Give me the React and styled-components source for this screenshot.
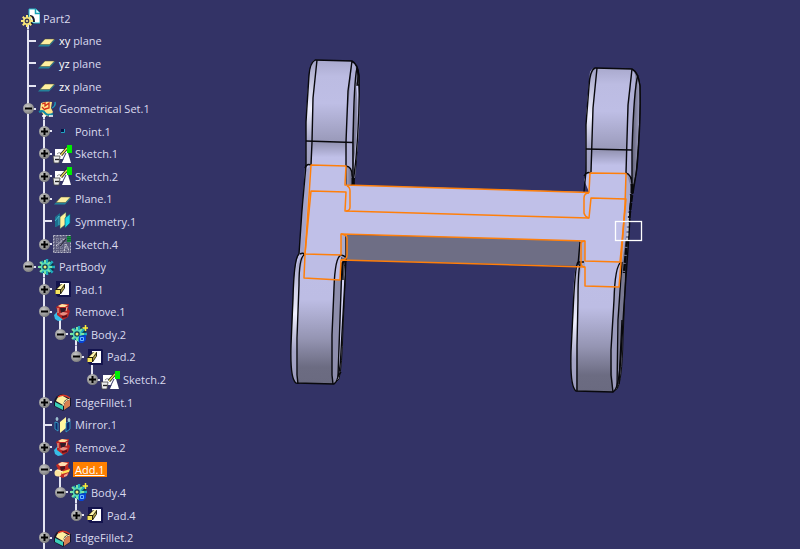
import React from "react";
import styled, { createGlobalStyle } from "styled-components";

const GlobalStyle = createGlobalStyle`
  body {
    margin: 0;
    background-color: #333366;
  }
`;

const Screen = styled.div`
  display: flex;
  min-height: 100vh;
  background-color: #333366;
  font-family: "Open Sans", "Noto Sans", sans-serif;
  font-size: 11px;
  line-height: 15px;
  color: #dadaee;
`;

const Tree = styled.ul`
  display: flex;
  flex-direction: column;
  flex: 0 0 190px;
  box-sizing: border-box;
  margin: 0;
  padding: 7px 0 0 20px;
  list-style: none;
`;

const Row = styled.li`
  display: flex;
  flex: 1 0 20px;
`;

const line = "linear-gradient(#e4e4f2, #e4e4f2)";

const guides = {
  none: "none",
  full: `${line} 7px 0 / 2px 100% no-repeat`,
  top: `${line} 7px 0 / 2px 50% no-repeat`,
  bottom: `${line} 7px 100% / 2px 50% no-repeat`,
};

const Guide = styled.span`
  flex: 0 0 16px;
  background: ${({ $line }) => guides[$line]};
`;

const Branch = styled(Guide)`
  display: flex;
  align-items: center;
  justify-content: center;
  background: ${({ $line }) => guides[$line]},
    ${line} 8px 50% / 8px 2px no-repeat;
`;

const Expander = styled.button`
  display: flex;
  align-items: center;
  justify-content: center;
  width: 11px;
  height: 11px;
  padding: 0;
  border: none;
  border-radius: 50%;
  background: radial-gradient(circle at 40% 35%, #c8c8c8, #8f8f8f 60%, #606060);
  cursor: pointer;
`;

const IconBox = styled.span`
  display: flex;
  flex: 0 0 20px;
  align-items: center;
  background: ${({ $line }) => guides[$line]};
`;

const Label = styled.a`
  align-self: center;
  margin-left: 1px;
  padding: 0 2px;
  color: ${({ $active }) => ($active ? "#ffffff" : "inherit")};
  background-color: ${({ $active }) => ($active ? "#ff8000" : "transparent")};
  text-decoration: ${({ $active }) => ($active ? "underline" : "none")};
  white-space: nowrap;
`;

const Strong = styled.span`
  color: #ffffff;
`;

const Viewport = styled.main`
  flex: 1;
  min-width: 0;
`;

const Model = styled.svg`
  display: block;
  width: 100%;
  height: 100vh;
`;

const Icon = ({ children }) => (
  <svg width="20" height="20" viewBox="0 0 20 20" aria-hidden="true">
    {children}
  </svg>
);

const spokes = [0, 45, 90, 135, 180, 225, 270, 315];

const Cog = ({ x, y, fill, r = 6, width = 2.5 }) => (
  <g stroke={fill} strokeWidth={width}>
    {spokes.map((angle) => (
      <path key={angle} d={`M${x} ${y - 2}V${y - r}`} transform={`rotate(${angle} ${x} ${y})`} />
    ))}
  </g>
);

const PartIcon = () => (
  <Icon>
    <circle cx="11" cy="11" r="4.5" fill="#5a5a66" stroke="#17172a" strokeWidth="2" />
    <path d="M9 1h7l4 4v10h-7l-4-6z" fill="#fff" stroke="#27b9c9" />
    <path d="M15.5 1v4.500H20" fill="#e8ffff" stroke="#159fb4" strokeWidth="1.500" />
    <path d="M10 8q4 0 4 6" fill="none" stroke="#17172a" strokeWidth="2" />
    <Cog x={7} y={13} r={6} width={2} fill="#f8e678" />
    <circle cx="7" cy="13" r="3.200" fill="#3a3850" stroke="#f8e678" strokeWidth="1.500" />
    <circle cx="7" cy="13" r="1" fill="#fff4a0" />
  </Icon>
);

const PlaneIcon = () => (
  <Icon>
    <path d="M2 15.500L8 9h11l-6 6.500z" fill="#24829a" />
    <path d="M4 13.500L9 8h9.500L13.500 13.500z" fill="#fff0a0" stroke="#4b4a2c" strokeWidth=".5" />
  </Icon>
);

const SetIcon = () => (
  <Icon>
    <path d="M5 4q5-2 11-1l-1 6 2 4-3 4q-4 1-7-2L4 11z" fill="#ffe588" />
    <path d="M6 5l3-1v3l4-3v5l-4 1M6 8l3 3" fill="none" stroke="#d22c18" strokeWidth="1.300" />
    <path d="M3 13q4-2 6 1t8 1" fill="none" stroke="#118aa6" strokeWidth="2.200" />
    <path d="M19 3q1 4-3 6" fill="none" stroke="#1b9dbe" strokeWidth="1.300" />
    <path d="M6 17h4M13 17h4" stroke="#fff" strokeWidth="1.300" />
  </Icon>
);

const PointIcon = () => (
  <Icon>
    <rect x="9" y="8" width="3" height="3" fill="#061548" />
    <path d="M9 11.500h3.500V8" fill="none" stroke="#1fa5c2" />
  </Icon>
);

const SketchIcon = () => (
  <Icon>
    <rect x="3" y="5" width="12" height="10" fill="#fff" />
    <path d="M10 19l4-10h2l3 10z" fill="#fff" />
    <path d="M10 17l4-8" stroke="#333366" />
    <path d="M5 10q3-3 5 1" fill="none" stroke="#888" />
    <path d="M9 11L15 4" stroke="#222" strokeWidth="3" />
    <path d="M9 11L15 4" stroke="#e5d75c" strokeWidth="1.400" />
    <rect x="15" y="1" width="5" height="8" fill="#00ee00" />
    <path d="M1 12h7l-1 7H2z" fill="#eee" stroke="#444" strokeWidth=".8" />
    <path d="M3 15.500h4" stroke="#222" strokeWidth="1.400" />
  </Icon>
);

const HiddenSketchIcon = () => (
  <Icon>
    <rect x="1.500" y="1.500" width="17" height="17" fill="#59597a" stroke="#b8b8c8" strokeDasharray="2 1" />
    <path d="M2 5h12M2 8h8M2 11h13M2 14h16M2 17h16M5 2v16M9 2v16M13 8v10" stroke="#aaaabd" strokeWidth=".8" strokeDasharray="1 1" />
    <path d="M4 12l9-8M12 17l2-7 3 7" fill="none" stroke="#d4d4dd" strokeDasharray="2 1" />
    <path d="M8 12l6-7" stroke="#24242e" />
    <rect x="15" y="2" width="4" height="6" fill="#178942" />
    <path d="M16 2v6M18 2v6" stroke="#08481e" strokeDasharray="1 1" />
  </Icon>
);

const PadIcon = () => (
  <Icon>
    <path d="M4 2h14l1 1v15H6l-2-2z" fill="#13134d" />
    <path d="M8 4h9v12H8z" fill="#fff" />
    <path d="M3 11l6-6h4v4l-4 6H3z" fill="#25200c" />
    <path d="M5 10l5-5h2.500L9 10z" fill="#fff6ae" />
    <path d="M3.500 11h4.500v4H3.500z" fill="#f6e45f" />
    <path d="M9 11l3-4v2.500l-3 4z" fill="#a99c48" />
  </Icon>
);

const MirrorIcon = () => (
  <Icon>
    <path d="M3 7l3 1v8l-3-2z" fill="#10266a" stroke="#34a8d0" strokeWidth=".8" />
    <path d="M8 7l6-5v11l-6 5z" fill="#fff79f" />
    <path d="M14 8l4-2v8l-4 3z" fill="#10266a" stroke="#34a8d0" strokeWidth=".8" />
    <path d="M5 2v4M3.500 4h3M17 3v4M15.500 5h3" stroke="#b8e3e9" strokeWidth="1.200" />
  </Icon>
);

const SymmetryIcon = () => (
  <Icon>
    <path d="M3 6l5-4v12l-4 2H3z" fill="#1c718e" />
    <path d="M3 10l4-5v9" fill="none" stroke="#45b6cb" />
    <path d="M8 6l6-5v12l-6 5z" fill="#fff29b" stroke="#2b5c5e" strokeWidth=".6" />
    <path d="M13 7l5-4v9l-5 5z" fill="#1dd7e8" stroke="#0c6270" strokeWidth=".7" />
  </Icon>
);

const BodyCog = () => (
  <g>
    <circle cx="11" cy="10" r="7" fill="#0a3140" />
    <Cog x={11} y={10} r={8} fill="#1fa9bd" />
    <Cog x={9} y={10} r={7} width={2} fill="#7fe6a0" />
    <circle cx="9" cy="10" r="3.500" fill="#163c4c" stroke="#4fd8bd" strokeWidth="1.500" />
    <circle cx="9" cy="10" r="1.500" fill="#ecf078" />
  </g>
);

const PartBodyIcon = () => (
  <Icon>
    <BodyCog />
  </Icon>
);

const BodyIcon = () => (
  <Icon>
    <BodyCog />
    <path d="M11 12l7-1v5l-3 3h-4z" fill="#0743d5" />
    <path d="M12.500 13.500h3v3h-3z" fill="none" stroke="#6bbbff" />
    <path d="M17.500 1v6M14.500 4h6" stroke="#ffed38" strokeWidth="1.500" />
  </Icon>
);

const RemoveIcon = () => (
  <Icon>
    <path d="M4 5l5-3h8l-1 5 2 2-2 6-5 3-7-2-1-4 3-2z" fill="#b92626" />
    <path d="M6 4l4-2 6 1-3 2H8z" fill="#ffe4a0" />
    <path d="M8 6h6v3l-5 2z" fill="#331b28" />
    <path d="M7 12l4-2 5 1-4 3z" fill="#e79083" />
    <path d="M6 6v5M15 5l-1 4" fill="none" stroke="#f6c1a6" />
    <path d="M10 15l5-1" stroke="#5a101a" strokeWidth="2" />
    <path d="M2 13l3-3v3l4 3 2 2-5 1-3-2z" fill="#37bde8" />
  </Icon>
);

const AddIcon = () => (
  <Icon>
    <path d="M4 5l5-3h8l-1 5 2 2-2 6-5 3-7-3 2-6z" fill="#c22c24" />
    <path d="M6 4l4-2 6 1-3 3H8z" fill="#ffe0b0" />
    <path d="M8 7l5-1v3l-4 2z" fill="#4a1720" />
    <path d="M9 12l9-3-1 3-7 2z" fill="#ffe257" />
    <path d="M12 15l4-2-1 3-3 1z" fill="#f2a590" />
    <circle cx="6" cy="13" r="3.500" fill="#ffe7a0" />
    <path d="M5 10l6 2" stroke="#fff5cb" />
  </Icon>
);

const FilletIcon = () => (
  <Icon>
    <path d="M2 10q1-7 8-8l9 4v8l-8 5-9-5z" fill="#161629" />
    <path d="M4 9q2-6 7-5l5 3q-4 0-5 6z" fill="#fff0a0" />
    <path d="M3 10l8 4v4l-8-4z" fill="#3ccfb8" />
    <path d="M12 13q1-5 6-5v6l-6 4z" fill="#d88052" />
    <path d="M6 5q5-4 12 1" fill="none" stroke="#e03a28" strokeWidth="1.500" />
    <path d="M11 14q1-6 7-7" fill="none" stroke="#fff4bc" />
  </Icon>
);

// lines: guide drawn in each ancestor column, last entry is the node's own branch
const nodes = [
  { name: "Part2", icon: PartIcon, lines: [], root: true },
  { accent: "xy", name: " plane", icon: PlaneIcon, lines: ["full"] },
  { accent: "yz", name: " plane", icon: PlaneIcon, lines: ["full"] },
  { accent: "zx", name: " plane", icon: PlaneIcon, lines: ["full"] },
  { name: "Geometrical Set.1", icon: SetIcon, lines: ["full"], open: true },
  { name: "Point.1", icon: PointIcon, lines: ["full", "full"], open: false },
  { name: "Sketch.1", icon: SketchIcon, lines: ["full", "full"], open: false },
  { name: "Sketch.2", icon: SketchIcon, lines: ["full", "full"], open: false },
  { name: "Plane.1", icon: PlaneIcon, lines: ["full", "full"], open: false },
  { name: "Symmetry.1", icon: SymmetryIcon, lines: ["full", "full"] },
  { name: "Sketch.4", icon: HiddenSketchIcon, lines: ["full", "top"], open: false },
  { name: "PartBody", icon: PartBodyIcon, lines: ["top"], open: true },
  { name: "Pad.1", icon: PadIcon, lines: ["none", "full"], open: false },
  { name: "Remove.1", icon: RemoveIcon, lines: ["none", "full"], open: true },
  { name: "Body.2", icon: BodyIcon, lines: ["none", "full", "top"], open: true },
  { name: "Pad.2", icon: PadIcon, lines: ["none", "full", "none", "top"], open: true },
  { name: "Sketch.2", icon: SketchIcon, lines: ["none", "full", "none", "none", "top"], open: false },
  { name: "EdgeFillet.1", icon: FilletIcon, lines: ["none", "full"], open: false },
  { name: "Mirror.1", icon: MirrorIcon, lines: ["none", "full"] },
  { name: "Remove.2", icon: RemoveIcon, lines: ["none", "full"], open: false },
  { name: "Add.1", icon: AddIcon, lines: ["none", "full"], open: true, active: true },
  { name: "Body.4", icon: BodyIcon, lines: ["none", "full", "top"], open: true },
  { name: "Pad.4", icon: PadIcon, lines: ["none", "full", "none", "top"], open: false },
  { name: "EdgeFillet.2", icon: FilletIcon, lines: ["none", "full"], open: false },
];

const TreeNode = ({ node }) => {
  const NodeIcon = node.icon;
  const parents = node.lines.slice(0, -1);
  const own = node.lines[node.lines.length - 1];

  return (
    <Row>
      {parents.map((type, i) => (
        <Guide key={i} $line={type} />
      ))}
      {own && (
        <Branch $line={own}>
          {node.open !== undefined && (
            <Expander type="button" aria-expanded={node.open} aria-label={node.name}>
              <svg width="9" height="9" viewBox="0 0 9 9" aria-hidden="true">
                <path
                  d={node.open ? "M1 4.500h7" : "M1 4.500h7M4.500 1v7"}
                  stroke="#000"
                  strokeWidth="2"
                />
              </svg>
            </Expander>
          )}
        </Branch>
      )}
      <IconBox $line={node.open || node.root ? "bottom" : "none"}>
        <NodeIcon />
      </IconBox>
      <Label href="#" $active={node.active}>
        {node.accent && <Strong>{node.accent}</Strong>}
        {node.name}
      </Label>
    </Row>
  );
};

const Frame = () => (
  <Model viewBox="190 0 610 549" role="img" aria-label="Part2">
    <defs>
      <linearGradient id="upper" x1="0" y1="0" x2="0" y2="1">
        <stop offset="0" stopColor="#a9a9cd" />
        <stop offset=".15" stopColor="#bcbce2" />
        <stop offset=".4" stopColor="#bebee5" />
        <stop offset=".75" stopColor="#9a9aba" />
        <stop offset=".77" stopColor="#9696b6" />
        <stop offset=".9" stopColor="#c0c0e8" />
        <stop offset="1" stopColor="#c0c0e8" />
      </linearGradient>
      <linearGradient id="lower" x1="0" y1="0" x2="0" y2="1">
        <stop offset="0" stopColor="#bebee6" />
        <stop offset=".35" stopColor="#bdbde4" />
        <stop offset=".65" stopColor="#9595b3" />
        <stop offset=".87" stopColor="#6c6c82" />
        <stop offset="1" stopColor="#6a6a80" />
      </linearGradient>
      <linearGradient id="rim" x1="0" y1="0" x2="0" y2="1">
        <stop offset="0" stopColor="#a0a0c4" />
        <stop offset=".45" stopColor="#f0f0ff" />
        <stop offset=".75" stopColor="#a4a4c6" />
        <stop offset="1" stopColor="#9c9cbc" />
      </linearGradient>
      <linearGradient id="side" x1="0" y1="0" x2="1" y2="0">
        <stop offset="0" stopColor="#a7a7cb" />
        <stop offset=".5" stopColor="#68687f" />
        <stop offset="1" stopColor="#a4a4c8" />
      </linearGradient>
    </defs>

    {/* upper left arm */}
    <path d="M350 61Q357 62 359 75Q360 115 356 165L354 184L346 187V61z" fill="url(#side)" stroke="#111" />
    <path d="M315 60L352 61L348 90L346 168L306 168L306 142Q307 95 311 66Q312 61 315 60z" fill="url(#upper)" />
    <path d="M315 60Q311 61 310 69Q305 105 306 168L311 165L313 95L317 60z" fill="url(#rim)" />
    <path d="M352 63Q357 63 356 78L352 142V175Q350 167 346 166L347 120z" fill="#b0b0d6" />
    <path d="M357 84Q361 112 355 162L354 178" fill="none" stroke="#cdcdf4" strokeWidth="2" />

    {/* upper right arm */}
    <path d="M630 69Q638 69 640 85Q641 120 636 174L632 194H626V69z" fill="url(#side)" stroke="#111" />
    <path d="M595 68L632 69L628 105L626 176L586 176L586 122Q588 90 590 72Q592 68 595 68z" fill="url(#upper)" />
    <path d="M595 68Q591 69 590 78Q584 120 586 175L591 172L593 110L597 68z" fill="url(#rim)" />
    <path d="M632 70Q637 72 635 90L632 150V185Q629 174 626 173L627 130z" fill="#b0b0d6" />

    {/* lower arms */}
    <path d="M340 256Q347 263 345 285L343 328Q342 368 339 379L334 384L330 258z" fill="#d2d2f4" stroke="#111" />
    <path d="M299 254L340 255L334 384L295 383Q290 378 291 345L293 305Q293 265 299 254z" fill="url(#lower)" />
    <path d="M304 256Q295 258 294 288L291 346Q290 378 296 383H297L298 330L299 275z" fill="url(#rim)" />
    <path d="M341 257Q335 257 334 288L332 335V375L333 384L338 378L340 330L342 275z" fill="#8e8eac" />
    <path d="M620 262L626 264L623 340Q622 382 617 389L612 392L609 264z" fill="#797992" stroke="#111" />
    <path d="M578 262L620 262L613 392L575 391Q570 387 571 352L573 312Q573 269 578 262z" fill="url(#lower)" />
    <path d="M582 264Q574 269 574 295L571 353Q570 387 576 391L577 338L579 285z" fill="url(#rim)" />
    <path d="M621 263Q614 266 614 300L611 350L613 392L618 384L619 310L622 275z" fill="#9a9aba" />

    {/* H shaped body */}
    <path d="M347 235L581 240V266L341 260z" fill="#6e6e85" />
    <path d="M341 233L347 235V259L341 257z" fill="#aaaacb" />
    <path d="M580 240H585V266H580z" fill="#a9a9cb" />
    <path d="M626 180L632 190L629 240L625 268L620 265z" fill="#7c7c96" />
    <path d="M307 165L346 166L346 185L589 192L584 180L587 172L626 173L630 195L626 220L624 246L621 262L585 261V241L341 234V255L299 254L302 215L305 168z" fill="#c0c0e8" />
    <path d="M306 170L310 166L304 254H299z" fill="#a4a4ca" />
    <path d="M626 173L631 187L628 222L622 263L620 261L626 200z" fill="#aaaad0" />
    <path d="M305 254L341 255L340 280L304 278zM585 261L621 262L619 287L585 286z" fill="#bdbde5" />

    <g fill="none" stroke="#08080c" strokeWidth="1.400">
      <path d="M315 60L352 61Q358 64 359 76Q360 112 356 158L353 185" />
      <path d="M315 60Q310 63 309 75L306 122V165L302 210L299 254Q294 258 293 298L291 345Q290 379 296 383L334 384Q340 380 341 351L345 279L346 258" />
      <path d="M317 60L313 98L312 142L311 165M352 61L348 91L346 142V166" />
      <path d="M357 68Q354 80 353 142V180M357 68Q359 76 357 85h2M306 141L353 142.500" />
      <path d="M305 168Q307 163 311 165M346 166Q352 167 352 175L354 185" />
      <path d="M353 178v8" strokeWidth="3" />
      <path d="M595 68L632 69Q638 72 640 86Q641 120 637 168L633 193L630 195" />
      <path d="M595 68Q590 70 589 86L586 125V171L584 192M597 68L593 108L591 172M632 69L628 105L626 173" />
      <path d="M638 75Q634 87 632 150V185M586 149L632 150M584 176Q587 171 591 173M626 173Q631 174 632 184" />
      <path d="M632 184v9" strokeWidth="3" />
      <path d="M300 254Q304 252 304 255Q299 258 299 285L297 338V375L298 384M341 255Q335 257 334 288L332 335V375L333 384" />
      <path d="M341 255Q347 256 346 261L342 263L338 376L341 372M343 261v19" />
      <path d="M578 262Q575 265 573 312L571 352Q570 387 576 391L613 392Q619 389 621 355L624 305L629 235L631 195" />
      <path d="M581 262Q578 266 578 300L577 345V391M621 262Q615 266 614 300L611 350V375L613 392" />
      <path d="M622 262L618 320L617 388M622 320L619 384M346 236V258M580 242L578 265M578 262h6" />
      <path d="M632 195L629 220M627 240L624 273" strokeWidth="2.500" strokeDasharray="7 1" />
    </g>

    <g fill="none" stroke="#ff7f0a" strokeWidth="1.500" strokeLinejoin="round">
      <path d="M311 165L346 166L345 185L589 192.500L590 173L626 173.500L625 205L621 262L619 287L585 286V267L341 260L340 280L304 278L305 254L309 196z" />
      <path d="M311 191L346 192L345 211L589 218L591 198L626 199L620 262L585 261V241L341 234V255L305 254z" />
      <path d="M347 186Q350 187 350 191V207Q350 211 346 211M589 193Q584 193 584 198V213Q585 217 589 218" />
      <path d="M341 234Q347 235 347 238V255Q347 260 341 260M585 241Q581 241 581 244V263Q581 267 585 267" />
    </g>

    <path d="M628 213L627 242" stroke="#c9c9d2" strokeWidth="2" strokeDasharray="3 2" />
    <rect x="615.500" y="221.500" width="26" height="19" fill="none" stroke="#fff" strokeWidth="1.300" />
  </Model>
);

const App = () => {
  return (
    <>
      <GlobalStyle />
      <Screen>
        <Tree>
          {nodes.map((node, i) => (
            <TreeNode key={i} node={node} />
          ))}
        </Tree>
        <Viewport>
          <Frame />
        </Viewport>
      </Screen>
    </>
  );
};

export default App;
